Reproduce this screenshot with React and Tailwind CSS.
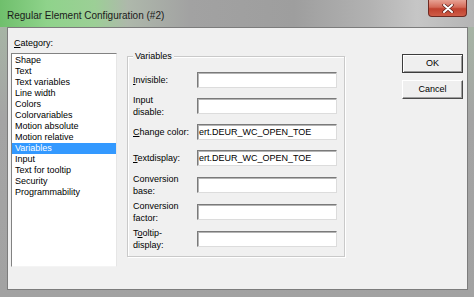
const categorias = [
  'Shape',
  'Text',
  'Text variables',
  'Line width',
  'Colors',
  'Colorvariables',
  'Motion absolute',
  'Motion relative',
  'Variables',
  'Input',
  'Text for tooltip',
  'Security',
  'Programmability',
];

const campos = [
  { label: <><u>I</u>nvisible:</>, valor: '' },
  { label: <>Input<br />disable:</>, valor: '' },
  { label: <><u>C</u>hange color:</>, valor: 'ert.DEUR_WC_OPEN_TOE' },
  { label: <><u>T</u>extdisplay:</>, valor: 'ert.DEUR_WC_OPEN_TOE' },
  { label: <>Conversion<br />base:</>, valor: '', extra: true },
  { label: <>Conversion<br />factor:</>, valor: '', extra: true },
  { label: <>T<u>o</u>oltip-<br />display:</>, valor: '', extra: true },
];

function Campo({ label, valor, extra }) {
  return (
    <div className={`flex items-center h-[16px] ${extra ? 'mt-[11px]' : 'mt-[10px] first:mt-0'}`}>
      <div className="w-[64px] leading-[12px]">{label}</div>
      <div className="w-[140px] h-[16px] bg-white border border-t-[#7a7a7a] border-l-[#7a7a7a] border-b-[#dcdcdc] border-r-[#dcdcdc] shadow-[inset_1px_1px_0_#b4b4b4] px-[1px] leading-[14px] whitespace-nowrap overflow-hidden">
        {valor}
      </div>
    </div>
  );
}

export default function App() {
  return (
    <div className="w-[474px] h-[297px] flex flex-col overflow-hidden bg-[linear-gradient(to_bottom,#a7b9a5_0%,#a4a4a4_40%,#a2a2a2_100%)] font-['Liberation_Sans',Arial,sans-serif] text-[9px] text-black">
      {/* barra de titulo */}
      <div className="relative h-[27px] flex items-center pl-[7px] bg-[linear-gradient(to_right,#6fbf6c_0%,#8fd38b_10%,#9ccf96_20%,#aeb8ab_27%,#a2a2a2_40%,#9e9e9e_62%,#b2b2b2_78%,#c6c6c6_88%,#b4b4b4_100%)]">
        <span className="text-[10px] text-[#1a1a1a] mt-[4px]">Regular Element Configuration (#2)</span>
        <div className="absolute left-[428px] top-0 w-[39px] h-[17px] rounded-b-[4px] border border-t-0 border-[#6e2a22] bg-[linear-gradient(to_bottom,#e7a294_0%,#d46a58_45%,#c0412e_55%,#cf5d48_100%)] flex items-center justify-center">
          <svg width="12" height="9" viewBox="0 0 12 9">
            <path d="M2 1 L10 8 M10 1 L2 8" stroke="#5a1f18" strokeWidth="3.4" strokeLinecap="round" />
            <path d="M2 1 L10 8 M10 1 L2 8" stroke="#ffffff" strokeWidth="2" strokeLinecap="round" />
          </svg>
        </div>
      </div>

      {/* marco + area cliente */}
      <div className="flex-1 pl-[7px] pr-[6px] pb-[7px]">
        <div className="h-full bg-[#f0f0f0] border border-[#7c7c7c] flex">
          {/* categorias */}
          <div className="ml-[3px] w-[106px] pt-[10px] flex flex-col">
            <div className="h-[11px] leading-[11px] pl-[3px]">
              <u>C</u>ategory:
            </div>
            <div className="mt-[4px] h-[214px] bg-white border border-t-[#828282] border-l-[#828282] border-b-[#f4f4f4] border-r-[#e6e6e6] pt-[1px]">
              {categorias.map(cat => (
                <div
                  key={cat}
                  className={`h-[11px] leading-[11px] px-[3px] whitespace-nowrap ${cat === 'Variables' ? 'bg-[#3399ff] text-white' : ''}`}
                >
                  {cat}
                </div>
              ))}
            </div>
          </div>

          {/* grupo variables */}
          <div className="relative ml-[10px] mt-[28px] w-[218px] h-[201px] border border-[#c9c9c9] shadow-[inset_1px_1px_0_#ffffff,1px_1px_0_#ffffff] pt-[15px] pl-[5px]">
            <span className="absolute left-[5px] top-[-6px] px-[2px] leading-[11px] bg-[#f0f0f0]">Variables</span>
            <div className="flex flex-col">
              {campos.map((c, i) => (
                <Campo key={i} {...c} />
              ))}
            </div>
          </div>

          {/* botones */}
          <div className="ml-[57px] mt-[26px] flex flex-col gap-[7px]">
            <button className="w-[61px] h-[19px] border border-[#3c3c3c] bg-[#efefef] shadow-[inset_1px_1px_0_#ffffff,inset_-1px_-1px_0_#9a9a9a] text-[9px] leading-[17px]">
              OK
            </button>
            <button className="w-[61px] h-[19px] border border-t-[#ffffff] border-l-[#ffffff] border-b-[#4a4a4a] border-r-[#4a4a4a] bg-[#efefef] shadow-[inset_-1px_-1px_0_#a0a0a0] text-[9px] leading-[17px]">
              Cancel
            </button>
          </div>
        </div>
      </div>
    </div>
  );
}
